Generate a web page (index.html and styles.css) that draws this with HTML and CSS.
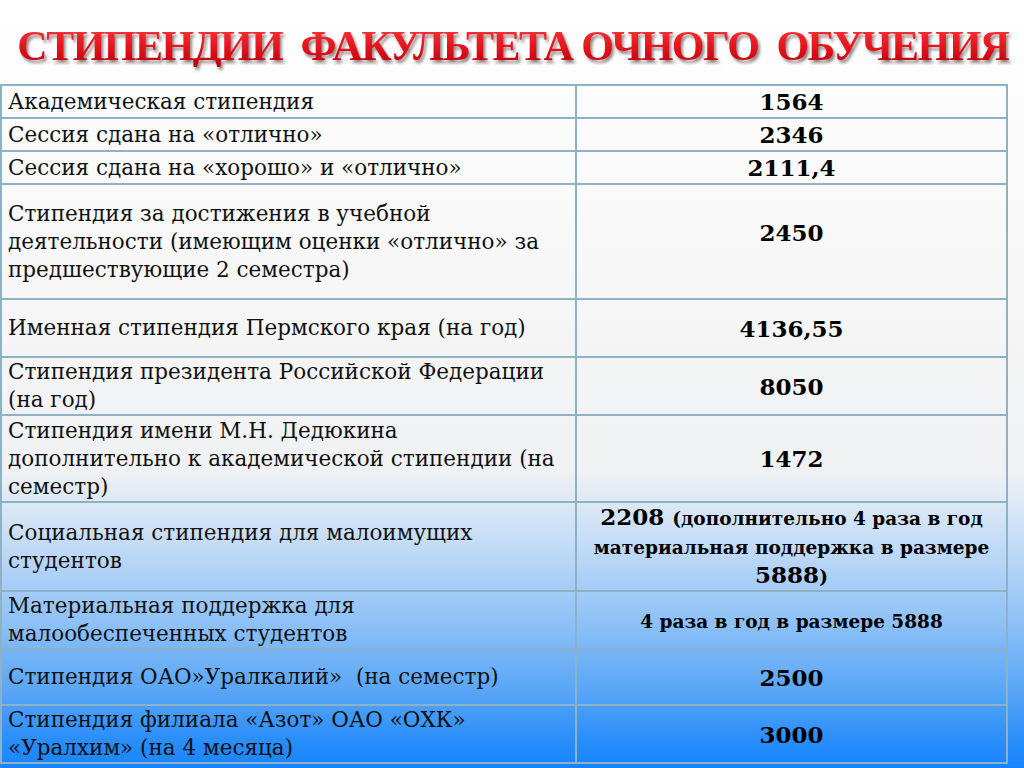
FILE: index.html
```html
<!DOCTYPE html>
<html lang="ru">
<head>
<meta charset="utf-8">
<title>Стипендии факультета очного обучения</title>
<link rel="stylesheet" href="styles.css">
</head>
<body>
<div class="slide">
  <header class="title-bar">
    <h1 class="title">СТИПЕНДИИ&nbsp; ФАКУЛЬТЕТА ОЧНОГО&nbsp; ОБУЧЕНИЯ</h1>
  </header>
  <table class="grants">
    <tr class="r-s">
      <td class="label">Академическая стипендия</td>
      <td class="value">1564</td>
    </tr>
    <tr class="r-s">
      <td class="label">Сессия сдана на «отлично»</td>
      <td class="value">2346</td>
    </tr>
    <tr class="r-s">
      <td class="label">Сессия сдана на «хорошо» и «отлично»</td>
      <td class="value">2111,4</td>
    </tr>
    <tr class="r-xl">
      <td class="label">Стипендия за достижения в учебной деятельности (имеющим оценки «отлично» за предшествующие 2 семестра)</td>
      <td class="value up">2450</td>
    </tr>
    <tr class="r-m">
      <td class="label">Именная стипендия Пермского края (на год)</td>
      <td class="value">4136,55</td>
    </tr>
    <tr class="r-m">
      <td class="label">Стипендия президента Российской Федерации (на год)</td>
      <td class="value">8050</td>
    </tr>
    <tr class="r-l">
      <td class="label">Стипендия имени М.Н. Дедюкина дополнительно к академической стипендии (на семестр)</td>
      <td class="value">1472</td>
    </tr>
    <tr class="r-l2">
      <td class="label">Социальная стипендия для малоимущих студентов</td>
      <td class="value">2208 <span class="small">(дополнительно 4 раза в год материальная поддержка в размере</span> 5888<span class="small">)</span></td>
    </tr>
    <tr class="r-m">
      <td class="label">Материальная поддержка для малообеспеченных студентов</td>
      <td class="value"><span class="small">4 раза в год в размере 5888</span></td>
    </tr>
    <tr class="r-m2">
      <td class="label">Стипендия ОАО»Уралкалий»&nbsp; (на семестр)</td>
      <td class="value">2500</td>
    </tr>
    <tr class="r-m">
      <td class="label">Стипендия филиала «Азот» ОАО «ОХК» «Уралхим» (на 4 месяца)</td>
      <td class="value">3000</td>
    </tr>
  </table>
</div>
</body>
</html>
```
FILE: styles.css
```css
html, body {
  margin: 0;
  padding: 0;
}
body {
  width: 1024px;
  height: 768px;
  overflow: hidden;
  background: linear-gradient(to bottom,
    #ffffff 0px,
    #f6f6f6 300px,
    #f0f1f3 470px,
    #dbe8f6 505px,
    #b9d6f6 560px,
    #8cc0f7 625px,
    #5aa6f6 690px,
    #2a8efa 740px,
    #1784ff 768px);
}
.slide {
  width: 1024px;
  height: 768px;
}
.title-bar {
  height: 84px;
  display: flex;
  align-items: center;
  justify-content: center;
  padding-left: 2px;
}
.title {
  margin: 0;
  padding-top: 8px;
  font-family: "Liberation Serif", "Times New Roman", serif;
  font-weight: bold;
  font-size: 42px;
  letter-spacing: -1.5px;
  white-space: nowrap;
  line-height: 1;
  background: linear-gradient(to bottom, #ff6a6a 0%, #f2262c 35%, #dc0e18 70%, #b5000e 100%);
  -webkit-background-clip: text;
  background-clip: text;
  color: transparent;
  filter: drop-shadow(2px 3px 1.5px rgba(60, 30, 30, 0.55));
}
.grants {
  border-collapse: collapse;
  width: 1008px;
  table-layout: fixed;
}
.grants td {
  border: 2px solid #8eb1c6;
  padding: 0 6px;
  vertical-align: middle;
}
.label {
  width: 561px;
  font-family: "DejaVu Serif", "Liberation Serif", serif;
  font-size: 21.5px;
  line-height: 28px;
  color: #111;
}
.value {
  text-align: center;
  font-family: "DejaVu Serif", serif;
  font-weight: bold;
  font-size: 23px;
  line-height: 27px;
  color: #000;
}
.value.up {
  padding-bottom: 18px;
}
.small {
  font-size: 18.5px;
}
.r-s { height: 33px; }
.r-xl { height: 115px; }
.r-m { height: 58px; }
.r-m2 { height: 56px; }
.r-l { height: 87px; }
.r-l2 { height: 85px; }
```
